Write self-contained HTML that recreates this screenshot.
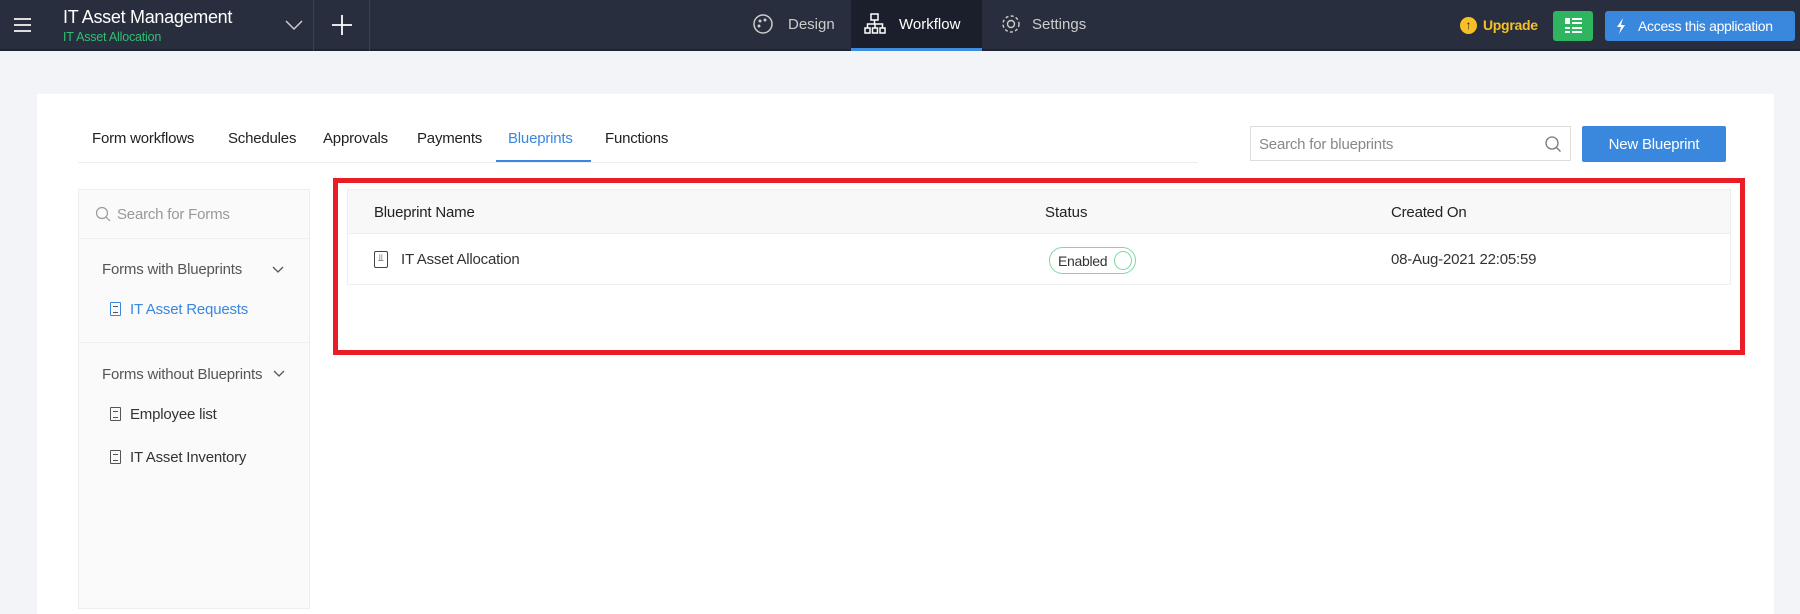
<!DOCTYPE html>
<html><head><meta charset="utf-8"><style>
*{box-sizing:border-box;margin:0;padding:0}
body{width:1800px;height:600px;overflow:hidden;background:#f3f4f8;font-family:"Liberation Sans",sans-serif;position:relative;color:#222}
.abs{position:absolute}
.hdr{left:0;top:0;width:1800px;height:51px;background:#282e3e;border-bottom:2px solid #1e2330}
.card{left:37px;top:94px;width:1737px;height:520px;background:#fff}
.tab{top:130px;font-size:15px;color:#222;letter-spacing:-0.2px}
.side{left:78px;top:189px;width:232px;height:420px;background:#fafafa;border:1px solid #eee}
.si{font-size:15px;color:#555;letter-spacing:-0.2px}
.doc{display:inline-block;width:11px;height:14px;border:1.5px solid #555;border-radius:1px;position:relative;vertical-align:-2px;margin-right:9px}
.doc:after{content:"";position:absolute;left:2px;top:3px;width:5px;height:5px;border-top:1px solid #555;border-bottom:1px solid #555}
</style></head><body>
<div class="abs hdr"></div>
<div class="abs" style="left:14px;top:18px;width:17px;height:2px;background:#ddd;box-shadow:0 6px 0 #ddd,0 12px 0 #ddd"></div>
<div class="abs" style="left:63px;top:7px;font-size:18px;color:#fff;letter-spacing:-0.3px">IT Asset Management</div>
<div class="abs" style="left:63px;top:30px;font-size:12.5px;color:#2fbf71;letter-spacing:-0.2px">IT Asset Allocation</div>
<svg class="abs" style="left:284px;top:18px" width="20" height="14"><path d="M2 3l8 8 8-8" stroke="#ccc" fill="none" stroke-width="1.5"/></svg>
<div class="abs" style="left:313px;top:0;width:1px;height:51px;background:#3a4152"></div>
<div class="abs" style="left:369px;top:0;width:1px;height:51px;background:#3a4152"></div>
<svg class="abs" style="left:331px;top:14px" width="22" height="22"><path d="M11 1v20M1 11h20" stroke="#fff" stroke-width="1.8"/></svg>
<svg class="abs" style="left:752px;top:13px" width="22" height="22"><circle cx="11" cy="11" r="9" stroke="#ccc" fill="none" stroke-width="1.5"/><circle cx="8" cy="8" r="1.5" fill="#ccc"/><circle cx="13" cy="7" r="1.5" fill="#ccc"/><circle cx="7" cy="13" r="1.5" fill="#ccc"/></svg>
<div class="abs" style="left:788px;top:16px;font-size:15px;color:#ccc">Design</div>
<div class="abs" style="left:851px;top:0;width:131px;height:51px;background:#1b1f2b;border-bottom:3px solid #3e8ee0"></div>
<svg class="abs" style="left:864px;top:13px" width="22" height="22"><g stroke="#fff" fill="none" stroke-width="1.5"><rect x="7" y="1" width="7" height="6"/><rect x="1" y="15" width="5" height="5"/><rect x="8.5" y="15" width="5" height="5"/><rect x="16" y="15" width="5" height="5"/><path d="M10.5 7v4M3.5 15v-4h15v4M11 11v4"/></g></svg>
<div class="abs" style="left:899px;top:16px;font-size:15px;color:#fff">Workflow</div>
<svg class="abs" style="left:1000px;top:13px" width="22" height="22"><circle cx="11" cy="11" r="3.5" stroke="#ccc" fill="none" stroke-width="1.4"/><circle cx="11" cy="11" r="8" stroke="#ccc" fill="none" stroke-width="1.4" stroke-dasharray="3 2.3"/></svg>
<div class="abs" style="left:1032px;top:16px;font-size:15px;color:#ccc">Settings</div>
<div class="abs" style="left:1460px;top:17px;width:17px;height:17px;border-radius:50%;background:#f6c026;color:#222;font-size:12px;text-align:center;line-height:17px;font-weight:bold">↑</div>
<div class="abs" style="left:1483px;top:17px;font-size:14px;color:#f6c026;font-weight:bold;letter-spacing:-0.3px">Upgrade</div>
<div class="abs" style="left:1553px;top:11px;width:40px;height:30px;background:#2fb560;border-radius:3px"></div>
<div class="abs" style="left:1565px;top:18px;width:5px;height:6px;background:#fff"></div>
<div class="abs" style="left:1572px;top:18px;width:10px;height:15px;background:linear-gradient(#fff 0 2px,transparent 2px 4px,#fff 4px 6px,transparent 6px 9px,#fff 9px 11px,transparent 11px 13px,#fff 13px 15px)"></div>
<div class="abs" style="left:1565px;top:27px;width:5px;height:6px;background:linear-gradient(#fff 0 2px,transparent 2px 4px,#fff 4px 6px)"></div>
<div class="abs" style="left:1605px;top:11px;width:190px;height:30px;background:#3a87de;border-radius:3px;color:#fff;font-size:14px;line-height:30px;padding-left:33px;letter-spacing:-0.3px">Access this application</div>
<svg class="abs" style="left:1615px;top:17px" width="12" height="18"><path d="M8 1L2 10h4l-2 7 6-9H6z" fill="#fff"/></svg>

<div class="abs card"></div>
<div class="abs" style="left:78px;top:162px;width:1120px;height:1px;background:#eee"></div>
<div class="abs tab" style="left:92px">Form workflows</div>
<div class="abs tab" style="left:228px">Schedules</div>
<div class="abs tab" style="left:323px">Approvals</div>
<div class="abs tab" style="left:417px">Payments</div>
<div class="abs tab" style="left:508px;color:#3a87de">Blueprints</div>
<div class="abs" style="left:496px;top:160px;width:95px;height:2px;background:#3a87de"></div>
<div class="abs tab" style="left:605px">Functions</div>
<div class="abs" style="left:1250px;top:126px;width:321px;height:35px;border:1px solid #ddd;background:#fff;font-size:15px;color:#888;padding:9px 8px;letter-spacing:-0.2px">Search for blueprints</div>
<svg class="abs" style="left:1544px;top:135px" width="18" height="18"><circle cx="8" cy="8" r="6" stroke="#777" fill="none" stroke-width="1.3"/><path d="M12.5 12.5l4 4" stroke="#777" stroke-width="1.3"/></svg>
<div class="abs" style="left:1582px;top:126px;width:144px;height:36px;background:#3a87de;border-radius:2px;color:#fff;font-size:15px;text-align:center;line-height:37px;letter-spacing:-0.2px">New Blueprint</div>

<div class="abs side"></div>
<div class="abs" style="left:78px;top:238px;width:232px;height:1px;background:#eee"></div>
<div class="abs" style="left:78px;top:342px;width:232px;height:1px;background:#eee"></div>
<svg class="abs" style="left:95px;top:206px" width="16" height="16"><circle cx="7" cy="7" r="5.5" stroke="#999" fill="none" stroke-width="1.2"/><path d="M11 11l4 4" stroke="#999" stroke-width="1.2"/></svg>
<div class="abs si" style="left:117px;top:206px;color:#999">Search for Forms</div>
<div class="abs si" style="left:102px;top:261px">Forms with Blueprints</div>
<svg class="abs" style="left:272px;top:265px" width="12" height="10"><path d="M1 2l5 5 5-5" stroke="#555" fill="none" stroke-width="1.3"/></svg>
<div class="abs si" style="left:110px;top:301px;color:#3a87de"><span class="doc" style="border-color:#3a87de"></span>IT Asset Requests</div>
<div class="abs si" style="left:102px;top:366px">Forms without Blueprints</div>
<svg class="abs" style="left:273px;top:369px" width="12" height="10"><path d="M1 2l5 5 5-5" stroke="#555" fill="none" stroke-width="1.3"/></svg>
<div class="abs si" style="left:110px;top:406px;color:#333"><span class="doc"></span>Employee list</div>
<div class="abs si" style="left:110px;top:449px;color:#333"><span class="doc"></span>IT Asset Inventory</div>

<div class="abs" style="left:347px;top:189px;width:1384px;height:96px;border:1px solid #eee"></div>
<div class="abs" style="left:348px;top:190px;width:1382px;height:44px;background:#f8f8f8;border-bottom:1px solid #eee"></div>
<div class="abs" style="left:374px;top:204px;font-size:15px;letter-spacing:-0.2px">Blueprint Name</div>
<div class="abs" style="left:1045px;top:204px;font-size:15px">Status</div>
<div class="abs" style="left:1391px;top:204px;font-size:15px;letter-spacing:-0.2px">Created On</div>
<div class="abs" style="left:374px;top:251px;width:14px;height:17px;border:1.5px solid #444;border-radius:2px;font-size:10px;text-align:center;line-height:14px;color:#444">⫫</div>
<div class="abs" style="left:401px;top:251px;font-size:15px;color:#333;letter-spacing:-0.2px">IT Asset Allocation</div>
<div class="abs" style="left:1049px;top:247px;width:87px;height:27px;border:1.5px solid #7fd8a4;border-radius:14px;font-size:14px;padding:5px 0 0 8px;color:#333;letter-spacing:-0.3px">Enabled</div>
<div class="abs" style="left:1114px;top:251px;width:18px;height:19px;border:1.5px solid #7fd8a4;border-radius:50%"></div>
<div class="abs" style="left:1391px;top:251px;font-size:15px;color:#333;letter-spacing:-0.2px">08-Aug-2021 22:05:59</div>

<div class="abs" style="left:333px;top:178px;width:1412px;height:177px;border:5px solid #e81d25"></div>
</body></html>
